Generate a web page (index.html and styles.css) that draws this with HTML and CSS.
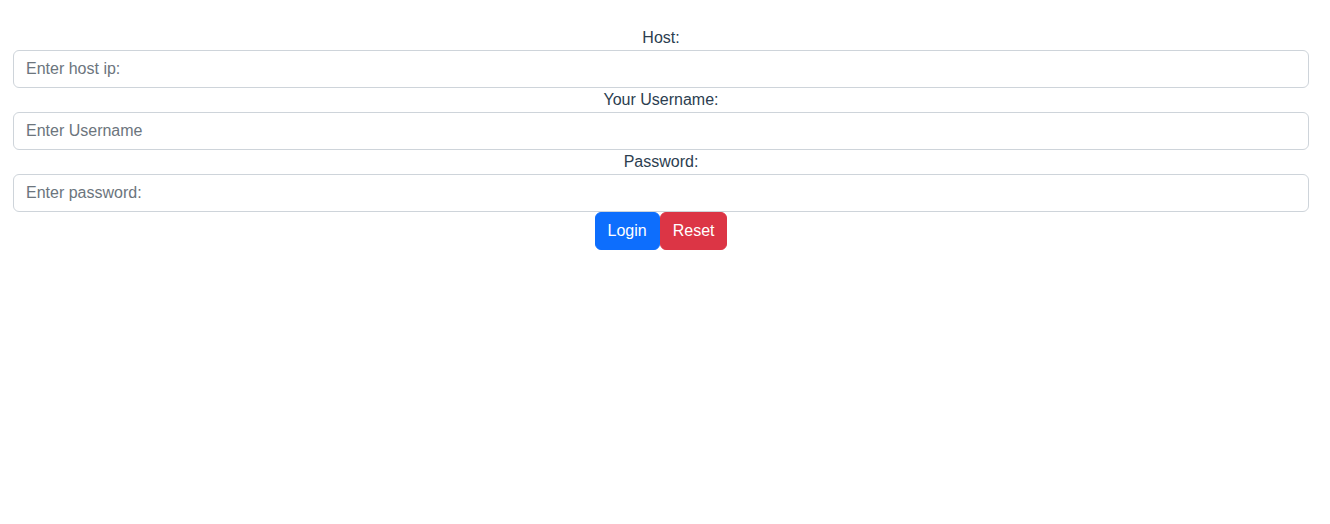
FILE: index.html
```html
<!DOCTYPE html>
<html lang="en">
<head>
<meta charset="utf-8">
<title>Login</title>
<link rel="stylesheet" href="styles.css">
</head>
<body>
<form class="login-form">
  <label class="form-label" for="host">Host:</label>
  <input class="form-control" id="host" type="text" placeholder="Enter host ip:">
  <label class="form-label" for="user">Your Username:</label>
  <input class="form-control" id="user" type="text" placeholder="Enter Username">
  <label class="form-label" for="pass">Password:</label>
  <input class="form-control" id="pass" type="password" placeholder="Enter password:">
  <div class="actions"><button type="button" class="btn btn-primary">Login</button><button type="reset" class="btn btn-danger">Reset</button></div>
</form>
</body>
</html>
```
FILE: styles.css
```css
* { box-sizing: border-box; }
html, body { margin: 0; padding: 0; background: #fff; }
body {
  font-family: "Liberation Sans", Arial, Helvetica, sans-serif;
  font-size: 16px;
  line-height: 1.5;
  color: #2c3e50;
}
.login-form {
  display: flex;
  flex-direction: column;
  padding: 26px 21px 0 13px;
}
.form-label {
  display: block;
  text-align: center;
  height: 24px;
  line-height: 24px;
  color: #2c3e50;
}
.form-control {
  display: block;
  width: 100%;
  height: 38px;
  padding: 6px 12px;
  font-family: inherit;
  font-size: 16px;
  line-height: 24px;
  color: #212529;
  background: #fff;
  border: 1px solid #ced4da;
  border-radius: 6px;
  outline: none;
}
.form-control::placeholder { color: #6c757d; opacity: 1; }
.actions {
  display: flex;
  justify-content: center;
}
.btn {
  height: 38px;
  padding: 6px 12px;
  font-family: inherit;
  font-size: 16px;
  line-height: 24px;
  color: #fff;
  border: 1px solid transparent;
  border-radius: 6px;
  cursor: pointer;
}
.btn-primary { background: #0d6efd; border-color: #0d6efd; }
.btn-danger { background: #dc3545; border-color: #dc3545; }
```
